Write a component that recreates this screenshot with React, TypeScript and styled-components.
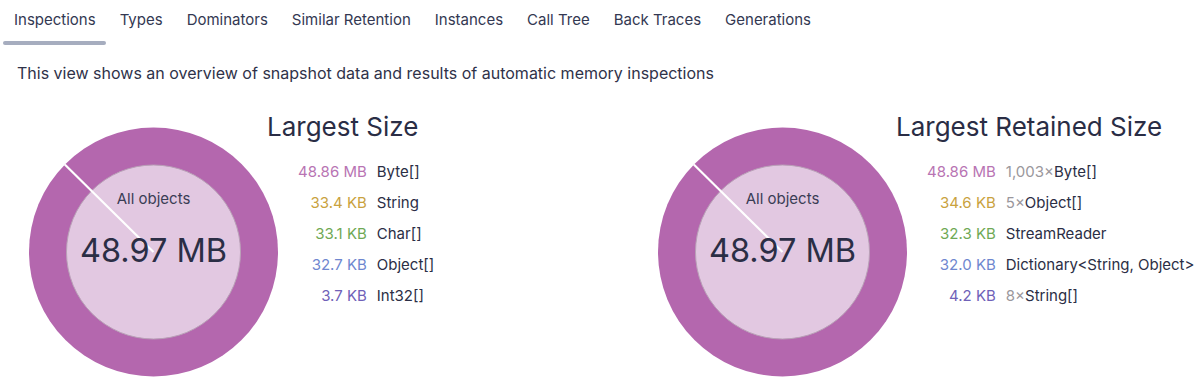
import React from "react";
import styled, { createGlobalStyle } from "styled-components";

const Global = createGlobalStyle`
  html, body { margin: 0; padding: 0; background: #ffffff; }
  body { font-family: Inter, "Noto Sans", sans-serif; color: #2b2e45; }
`;

const Page = styled.div`
  width: 1199px;
  height: 385px;
  overflow: hidden;
  display: flex;
  flex-direction: column;
`;

const TabBar = styled.div`
  display: flex;
  align-items: stretch;
  height: 46px;
  padding-left: 2px;
`;

const Tab = styled.div<{ $active?: boolean }>`
  position: relative;
  padding: 11px 12px 0 12px;
  font-size: 15px;
  line-height: 18px;
  color: #333852;
  &::after {
    content: "";
    display: ${(p) => (p.$active ? "block" : "none")};
    position: absolute;
    left: 1px;
    right: 2px;
    bottom: 1px;
    height: 4px;
    border-radius: 2px;
    background: #a6adbf;
  }
`;

const Description = styled.div`
  padding: 18px 0 0 17px;
  font-size: 16px;
  line-height: 18px;
  color: #2f3249;
`;

const Panels = styled.div`
  display: flex;
  padding: 29px 0 0 29px;
`;

const Panel = styled.div<{ $width: number }>`
  display: flex;
  align-items: flex-start;
  width: ${(p) => p.$width}px;
  flex-shrink: 0;
`;

const DonutBox = styled.div`
  position: relative;
  width: 249px;
  height: 250px;
  margin-top: 16px;
  flex-shrink: 0;
`;

const DonutSvg = styled.svg`
  display: block;
`;

const DonutLabel = styled.div`
  position: absolute;
  inset: 0;
  display: flex;
  flex-direction: column;
  align-items: center;
  pointer-events: none;
`;

const SmallLabel = styled.div`
  margin-top: 63px;
  font-size: 15px;
  line-height: 18px;
  color: #3a3d55;
`;

const BigLabel = styled.div`
  margin-top: 23px;
  font-size: 32.5px;
  line-height: 40px;
  color: #2b2e45;
`;

const Legend = styled.div`
  margin-left: -11px;
  display: flex;
  flex-direction: column;
`;

const Title = styled.div`
  font-size: 26px;
  line-height: 32px;
  color: #2a2d45;
  white-space: nowrap;
`;

const Rows = styled.div`
  display: grid;
  grid-template-columns: auto auto;
  column-gap: 10px;
  row-gap: 13px;
  margin: 20px 0 0 31px;
  justify-content: start;
`;

const Value = styled.div<{ $color: string }>`
  justify-self: end;
  font-size: 15px;
  line-height: 18px;
  color: ${(p) => p.$color};
  white-space: nowrap;
`;

const Name = styled.div`
  font-size: 15px;
  line-height: 18px;
  color: #2b2e45;
  white-space: nowrap;
`;

const Count = styled.span`
  color: #9a979c;
`;

type Row = { value: string; color: string; count?: string; name: string };

const COLORS = ["#b874b3", "#c9a23e", "#6fa955", "#6f87cf", "#7061b8"];

const left: Row[] = [
  { value: "48.86 MB", color: COLORS[0], name: "Byte[]" },
  { value: "33.4 KB", color: COLORS[1], name: "String" },
  { value: "33.1 KB", color: COLORS[2], name: "Char[]" },
  { value: "32.7 KB", color: COLORS[3], name: "Object[]" },
  { value: "3.7 KB", color: COLORS[4], name: "Int32[]" },
];

const right: Row[] = [
  { value: "48.86 MB", color: COLORS[0], count: "1,003×", name: "Byte[]" },
  { value: "34.6 KB", color: COLORS[1], count: "5×", name: "Object[]" },
  { value: "32.3 KB", color: COLORS[2], name: "StreamReader" },
  { value: "32.0 KB", color: COLORS[3], name: "Dictionary<String, Object>" },
  { value: "4.2 KB", color: COLORS[4], count: "8×", name: "String[]" },
];

function Donut() {
  return (
    <DonutBox>
      <DonutSvg width="249" height="250" viewBox="0 0 249 250">
        <circle cx="124.5" cy="125" r="124.5" fill="#b467ae" />
        <circle cx="124.5" cy="125" r="87" fill="#e2c8e1" stroke="#b9a1b7" strokeWidth="1" />
        <line x1="124.5" y1="125" x2="35.8" y2="37.5" stroke="#ffffff" strokeWidth="2.2" />
      </DonutSvg>
      <DonutLabel>
        <SmallLabel>All objects</SmallLabel>
        <BigLabel>48.97 MB</BigLabel>
      </DonutLabel>
    </DonutBox>
  );
}

function Chart({ title, rows, width }: { title: string; rows: Row[]; width: number }) {
  return (
    <Panel $width={width}>
      <Donut />
      <Legend>
        <Title>{title}</Title>
        <Rows>
          {rows.map((r) => (
            <React.Fragment key={r.value + r.name}>
              <Value $color={r.color}>{r.value}</Value>
              <Name>
                {r.count && <Count>{r.count}</Count>}
                {r.name}
              </Name>
            </React.Fragment>
          ))}
        </Rows>
      </Legend>
    </Panel>
  );
}

const tabs = [
  "Inspections",
  "Types",
  "Dominators",
  "Similar Retention",
  "Instances",
  "Call Tree",
  "Back Traces",
  "Generations",
];

export default function App() {
  return (
    <Page>
      <Global />
      <TabBar>
        {tabs.map((t, i) => (
          <Tab key={t} $active={i === 0}>
            {t}
          </Tab>
        ))}
      </TabBar>
      <Description>
        This view shows an overview of snapshot data and results of automatic memory inspections
      </Description>
      <Panels>
        <Chart title="Largest Size" rows={left} width={629} />
        <Chart title="Largest Retained Size" rows={right} width={541} />
      </Panels>
    </Page>
  );
}
